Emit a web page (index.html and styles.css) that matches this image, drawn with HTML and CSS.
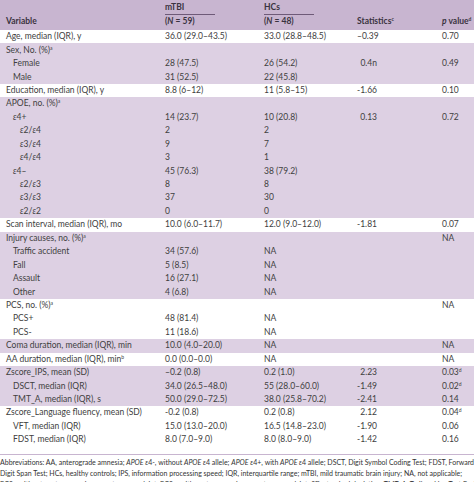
FILE: index.html
```html
<!DOCTYPE html>
<html lang="en">
<head>
<meta charset="utf-8">
<title>Table</title>
<link rel="stylesheet" href="styles.css">
</head>
<body>
<div class="page">
<table class="tbl">
  <colgroup>
    <col class="c1"><col class="c2"><col class="c3"><col class="c4"><col class="c5">
  </colgroup>
  <thead>
    <tr class="h1">
      <th></th>
      <th><span class="grp">mTBI</span></th>
      <th><span class="grp">HCs</span></th>
      <th></th>
      <th></th>
    </tr>
    <tr class="h2">
      <th>Variable</th>
      <th>(<i>N</i> = 59)</th>
      <th>(<i>N</i> = 48)</th>
      <th>Statistics<sup>c</sup></th>
      <th><i>p</i> value<sup>d</sup></th>
    </tr>
  </thead>
  <tbody class="w">
    <tr><td>Age, median (IQR), y</td><td>36.0 (29.0–43.5)</td><td>33.0 (28.8–48.5)</td><td class="st">–0.39</td><td>0.70</td></tr>
  </tbody>
  <tbody class="p">
    <tr><td>Sex, No. (%)<sup>a</sup></td><td></td><td></td><td></td><td></td></tr>
    <tr><td class="i1">Female</td><td>28 (47.5)</td><td>26 (54.2)</td><td class="st">0.4n</td><td>0.49</td></tr>
    <tr><td class="i1">Male</td><td>31 (52.5)</td><td>22 (45.8)</td><td></td><td></td></tr>
  </tbody>
  <tbody class="w">
    <tr><td>Education, median (IQR), y</td><td>8.8 (6–12)</td><td>11 (5.8–15)</td><td class="st">-1.66</td><td>0.10</td></tr>
  </tbody>
  <tbody class="p">
    <tr><td>APOE, no. (%)<sup>a</sup></td><td></td><td></td><td></td><td></td></tr>
    <tr><td class="i1"><i>ε</i>4+</td><td>14 (23.7)</td><td>10 (20.8)</td><td class="st">0.13</td><td>0.72</td></tr>
    <tr><td class="i2"><i>ε</i>2/<i>ε</i>4</td><td>2</td><td>2</td><td></td><td></td></tr>
    <tr><td class="i2"><i>ε</i>3/<i>ε</i>4</td><td>9</td><td>7</td><td></td><td></td></tr>
    <tr><td class="i2"><i>ε</i>4/<i>ε</i>4</td><td>3</td><td>1</td><td></td><td></td></tr>
    <tr><td class="i1"><i>ε</i>4–</td><td>45 (76.3)</td><td>38 (79.2)</td><td></td><td></td></tr>
    <tr><td class="i2"><i>ε</i>2/<i>ε</i>3</td><td>8</td><td>8</td><td></td><td></td></tr>
    <tr><td class="i2"><i>ε</i>3/<i>ε</i>3</td><td>37</td><td>30</td><td></td><td></td></tr>
    <tr><td class="i2"><i>ε</i>2/<i>ε</i>2</td><td>0</td><td>0</td><td></td><td></td></tr>
  </tbody>
  <tbody class="w">
    <tr><td>Scan interval, median (IQR), mo</td><td>10.0 (6.0–11.7)</td><td>12.0 (9.0–12.0)</td><td class="st">-1.81</td><td>0.07</td></tr>
  </tbody>
  <tbody class="p">
    <tr><td>Injury causes, no. (%)<sup>a</sup></td><td></td><td></td><td></td><td>NA</td></tr>
    <tr><td class="i1">Traffic accident</td><td>34 (57.6)</td><td>NA</td><td></td><td></td></tr>
    <tr><td class="i1">Fall</td><td>5 (8.5)</td><td>NA</td><td></td><td></td></tr>
    <tr><td class="i1">Assault</td><td>16 (27.1)</td><td>NA</td><td></td><td></td></tr>
    <tr><td class="i1">Other</td><td>4 (6.8)</td><td>NA</td><td></td><td></td></tr>
  </tbody>
  <tbody class="w">
    <tr><td>PCS, no. (%)<sup>a</sup></td><td></td><td></td><td></td><td>NA</td></tr>
    <tr><td class="i1">PCS+</td><td>48 (81.4)</td><td>NA</td><td></td><td></td></tr>
    <tr><td class="i1">PCS-</td><td>11 (18.6)</td><td>NA</td><td></td><td></td></tr>
  </tbody>
  <tbody class="p">
    <tr><td>Coma duration, median (IQR), min</td><td>10.0 (4.0–20.0)</td><td>NA</td><td></td><td>NA</td></tr>
  </tbody>
  <tbody class="w">
    <tr><td>AA duration, median (IQR), min<sup>b</sup></td><td>0.0 (0.0–0.0)</td><td>NA</td><td></td><td>NA</td></tr>
  </tbody>
  <tbody class="p">
    <tr><td>Zscore_IPS, mean (SD)</td><td>–0.2 (0.8)</td><td>0.2 (1.0)</td><td class="st">2.23</td><td>0.03<sup>d</sup></td></tr>
    <tr><td class="i1">DSCT, median (IQR)</td><td>34.0 (26.5–48.0)</td><td>55 (28.0–60.0)</td><td class="st">-1.49</td><td>0.02<sup>d</sup></td></tr>
    <tr><td class="i1">TMT_A, median (IQR), s</td><td>50.0 (29.0–72.5)</td><td>38.0 (25.8–70.2)</td><td class="st">-2.41</td><td>0.14</td></tr>
  </tbody>
  <tbody class="w">
    <tr><td>Zscore_Language fluency, mean (SD)</td><td>-0.2 (0.8)</td><td>0.2 (0.8)</td><td class="st">2.12</td><td>0.04<sup>d</sup></td></tr>
    <tr><td class="i1">VFT, median (IQR)</td><td>15.0 (13.0–20.0)</td><td>16.5 (14.8–23.0)</td><td class="st">-1.90</td><td>0.06</td></tr>
    <tr><td class="i1">FDST, median (IQR)</td><td>8.0 (7.0–9.0)</td><td>8.0 (8.0–9.0)</td><td class="st">-1.42</td><td>0.16</td></tr>
  </tbody>
</table>
<div class="notes">
  <p class="ln">Abbreviations: AA, anterograde amnesia; <i>APOE ε</i>4-, without <i>APOE ε</i>4 allele; <i>APOE ε</i>4+, with <i>APOE ε</i>4 allele; DSCT, Digit Symbol Coding Test; FDST, Forward</p>
  <p class="ln">Digit Span Test; HCs, healthy controls; IPS, information processing speed; IQR, interquartile range; mTBI, mild traumatic brain injury; NA, not applicable;</p>
  <p class="ln">PCS-, without post-concussion symptom complaint; PCS+, with post-concussion symptom complaint; SD, standard deviation; TMT_A, Trail-making Test Part</p>
</div>
</div>
</body>
</html>
```
FILE: styles.css
```css
html, body {
  margin: 0;
  padding: 0;
  background: #ffffff;
}
body {
  width: 474px;
  height: 482px;
  overflow: hidden;
  font-family: Lato, "Open Sans", sans-serif;
  color: #404040;
}
.page {
  width: 474px;
}
.tbl {
  width: 474px;
  border-collapse: collapse;
  table-layout: fixed;
  font-size: 8.5px;
}
.c1 { width: 160px; }
.c2 { width: 99px; }
.c3 { width: 98px; }
.c4 { width: 80px; }
.c5 { width: 37px; }
.tbl th, .tbl td {
  padding: 0 0 0 5px;
  text-align: left;
  white-space: nowrap;
  vertical-align: middle;
}
.tbl td:first-child, .tbl th:first-child {
  padding-left: 6px;
}
thead {
  background: #c8b5d0;
}
.tbl th {
  font-weight: 700;
  color: #3a3340;
}
.h1 th { height: 15px; vertical-align: top; padding-top: 3px; line-height: 9px; }
.h2 th { height: 15px; vertical-align: top; padding-top: 2px; line-height: 9px; }
.grp {
  display: inline-block;
  width: 50px;
  padding-bottom: 2px;
  border-bottom: 1px solid #6e5a78;
}
.h1 th, .h2 th { box-sizing: border-box; }
tbody.p { background: #ddd0e3; }
tbody.w { background: #ffffff; }
.tbl td { height: 13.45px; line-height: 9px; }
.i1 { text-indent: 7px; }
.i2 { text-indent: 14px; }
.tbl td.st { text-align: right; padding-right: 60px; padding-left: 0; }
.tbl th:nth-child(4) { padding-left: 0; }
sup {
  font-size: 5px;
  vertical-align: 3px;
  line-height: 0;
}
.notes {
  margin-top: 7px;
  border-top: 1px solid #c8b5d0;
  padding-top: 2px;
  font-size: 7px;
  color: #333333;
}
.ln {
  margin: 0;
  white-space: nowrap;
  line-height: 11px;
}
```
